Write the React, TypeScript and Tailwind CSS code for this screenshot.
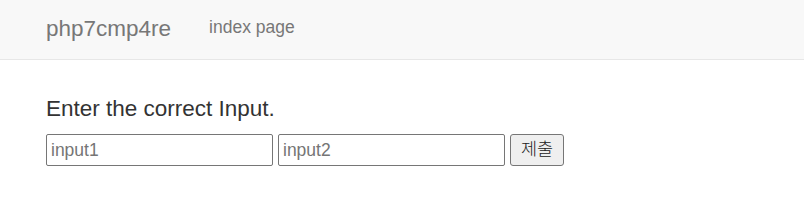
export default function App() {
  return (
    <div className="min-h-[201px] bg-white" style={{ fontFamily: '"Liberation Sans", "Noto Sans CJK KR", sans-serif' }}>
      <nav className="h-[60px] bg-[#f8f8f8] border-b border-[#e7e7e7] flex items-center pl-[46px]">
        <span className="text-[22.5px] text-[#777] leading-none">php7cmp4re</span>
        <span className="ml-[38px] mb-[3px] text-[17.5px] text-[#777] leading-none">index page</span>
      </nav>
      <div className="pl-[46px] pt-[36px]">
        <h4 className="text-[22.5px] leading-[25px] text-[#333]">Enter the correct Input.</h4>
        <form className="mt-[13px] flex items-center gap-[5px]" onSubmit={(e) => e.preventDefault()}>
          <input
            placeholder="input1"
            className="w-[227px] h-[32px] border border-[#767676] rounded-[2px] px-[4px] text-[17.5px] text-[#333] placeholder:text-[#757575] outline-none"
          />
          <input
            placeholder="input2"
            className="w-[227px] h-[32px] border border-[#767676] rounded-[2px] px-[4px] text-[17.5px] text-[#333] placeholder:text-[#757575] outline-none"
          />
          <button
            type="submit"
            className="h-[32px] w-[54px] bg-[#efefef] border border-[#767676] rounded-[3px] text-[17.5px] text-[#222] font-light leading-none"
          >
            제출
          </button>
        </form>
      </div>
    </div>
  );
}
